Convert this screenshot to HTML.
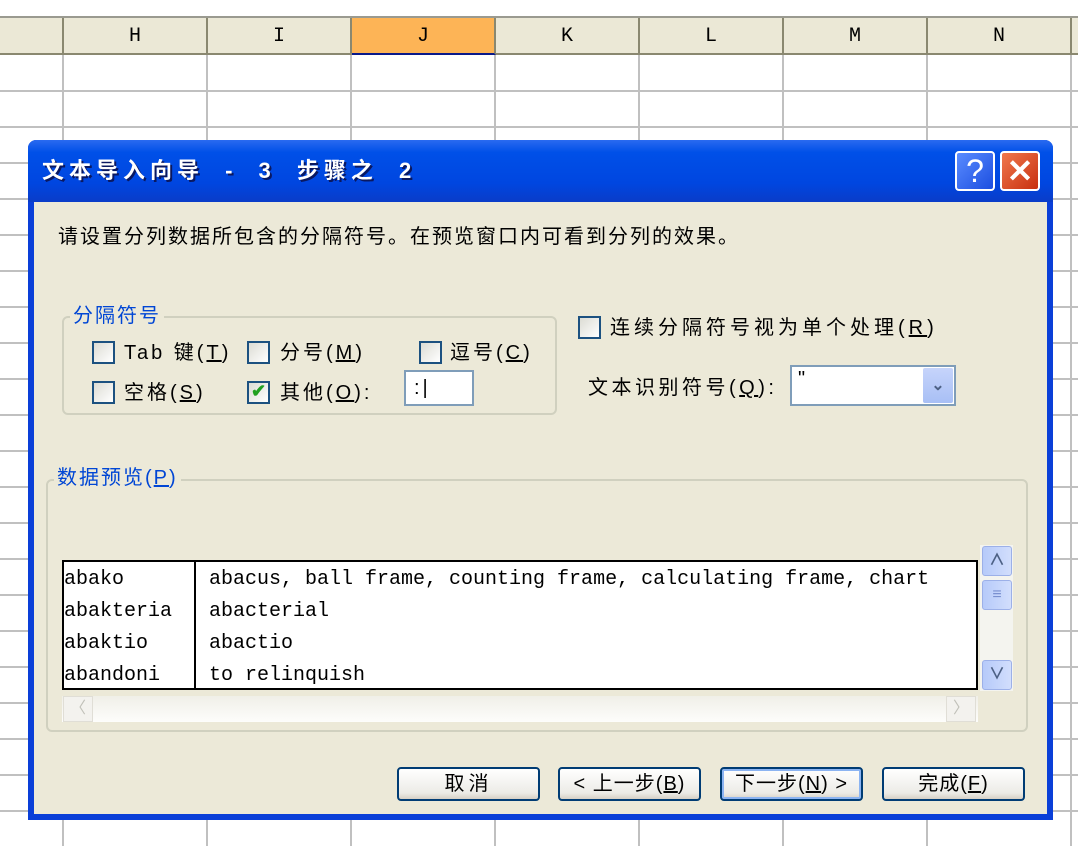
<!DOCTYPE html>
<html><head><meta charset="utf-8"><style>
*{box-sizing:border-box;margin:0;padding:0}
html,body{width:1078px;height:846px;overflow:hidden}
body{background:#fff;position:relative;font-family:"Liberation Sans","Noto Sans CJK SC","WenQuanYi Zen Hei",sans-serif;}
.a{position:absolute}
.hl{position:absolute;left:0;width:1078px;height:2px;background:#c0c0c0}
.vl{position:absolute;top:18px;width:2px;height:828px;background:#c0c0c0}
.hd{position:absolute;top:18px;height:37px;background:#ebe8d6;border-right:2px solid #8a8870;border-bottom:2px solid #8a8870;font:20px "Liberation Mono",monospace;text-align:center;line-height:37px;color:#000}
.t{position:absolute;font-size:20px;color:#000;white-space:nowrap;line-height:24px;letter-spacing:3px}
.cb{position:absolute;width:23px;height:23px;border:2px solid #1c5180;background:linear-gradient(135deg,#dcdcd4,#fff)}
.gb{position:absolute;border:2px solid #d0d0bf;border-radius:6px}
.lg{position:absolute;background:#ece9d8;color:#0046d5;font-size:20px;padding:0 3px;line-height:24px;white-space:nowrap;letter-spacing:2px}
.btn{position:absolute;top:767px;width:143px;height:34px;border:2px solid #003c74;border-radius:4px;background:linear-gradient(#fff,#ecebe6 80%,#d6d0c5);font-size:20px;text-align:center;line-height:30px;letter-spacing:1px;white-space:nowrap}
.m{font-family:"Liberation Mono",monospace;font-size:20px;position:absolute;white-space:nowrap;line-height:22px}
</style></head><body>
<div class="a" style="left:0;top:16px;width:1078px;height:2px;background:#9a9a90"></div>
<div class="hd" style="left:0;width:64px"></div>
<div class="hd" style="left:64px;width:144px">H</div>
<div class="hd" style="left:208px;width:144px">I</div>
<div class="hd" style="left:352px;width:144px;background:#fdb456;border-bottom-color:#0a1a8a">J</div>
<div class="hd" style="left:496px;width:144px">K</div>
<div class="hd" style="left:640px;width:144px">L</div>
<div class="hd" style="left:784px;width:144px">M</div>
<div class="hd" style="left:928px;width:144px">N</div>
<div class="hd" style="left:1072px;width:10px"></div>
<div class="hl" style="top:90px"></div><div class="hl" style="top:126px"></div><div class="hl" style="top:162px"></div><div class="hl" style="top:198px"></div><div class="hl" style="top:234px"></div><div class="hl" style="top:270px"></div><div class="hl" style="top:306px"></div><div class="hl" style="top:342px"></div><div class="hl" style="top:378px"></div><div class="hl" style="top:414px"></div><div class="hl" style="top:450px"></div><div class="hl" style="top:486px"></div><div class="hl" style="top:522px"></div><div class="hl" style="top:558px"></div><div class="hl" style="top:594px"></div><div class="hl" style="top:630px"></div><div class="hl" style="top:666px"></div><div class="hl" style="top:702px"></div><div class="hl" style="top:738px"></div><div class="hl" style="top:774px"></div><div class="hl" style="top:810px"></div>
<div class="vl" style="left:62px;top:55px"></div><div class="vl" style="left:206px;top:55px"></div><div class="vl" style="left:350px;top:55px"></div><div class="vl" style="left:494px;top:55px"></div><div class="vl" style="left:638px;top:55px"></div><div class="vl" style="left:782px;top:55px"></div><div class="vl" style="left:926px;top:55px"></div><div class="vl" style="left:1070px;top:55px"></div>

<div class="a" style="left:28px;top:140px;width:1025px;height:680px;background:#0a3fd8;border-radius:8px 8px 0 0"></div>
<div class="a" style="left:28px;top:140px;width:1025px;height:62px;background:linear-gradient(#2a6af0,#0050e8 20%,#0046e0 70%,#0a3cc8);border-radius:8px 8px 0 0"></div>
<div class="a" style="left:42px;top:156px;color:#fff;font-size:22px;font-weight:bold;text-shadow:2px 2px 0 #0a1860;white-space:nowrap;line-height:30px;letter-spacing:5px;word-spacing:10px">文本导入向导 - 3 步骤之 2</div>
<div class="a" style="left:955px;top:151px;width:40px;height:40px;border:2px solid #fff;border-radius:4px;background:linear-gradient(135deg,#5a8cff,#1c4ee0);color:#fff;font-size:32px;text-align:center;line-height:36px">?</div>
<div class="a" style="left:1000px;top:151px;width:40px;height:40px;border:2px solid #fff;border-radius:4px;background:linear-gradient(135deg,#f0784c,#c83010);color:#fff;font-size:32px;text-align:center;line-height:36px;font-weight:bold">✕</div>
<div class="a" style="left:34px;top:202px;width:1013px;height:612px;background:#ece9d8"></div>

<div class="t" style="left:58px;top:225px;letter-spacing:2px">请设置分列数据所包含的分隔符号。在预览窗口内可看到分列的效果。</div>

<div class="gb" style="left:62px;top:316px;width:495px;height:99px"></div>
<div class="lg" style="left:70px;top:304px">分隔符号</div>
<div class="cb" style="left:92px;top:341px"></div><div class="t" style="left:124px;top:341px">Tab 键(<u>T</u>)</div>
<div class="cb" style="left:247px;top:341px"></div><div class="t" style="left:280px;top:341px">分号(<u>M</u>)</div>
<div class="cb" style="left:419px;top:341px"></div><div class="t" style="left:450px;top:341px">逗号(<u>C</u>)</div>
<div class="cb" style="left:92px;top:381px"></div><div class="t" style="left:124px;top:381px">空格(<u>S</u>)</div>
<div class="cb" style="left:247px;top:381px"><span style="position:absolute;left:2px;top:-2px;color:#21a121;font-size:18px;font-weight:bold">✔</span></div><div class="t" style="left:280px;top:381px">其他(<u>O</u>):</div>
<div class="a" style="left:404px;top:370px;width:70px;height:36px;background:#fff;border:2px solid #7f9db9"><span class="t" style="left:8px;top:4px">:|</span></div>

<div class="cb" style="left:578px;top:316px"></div><div class="t" style="left:610px;top:316px;letter-spacing:4px">连续分隔符号视为单个处理(<u>R</u>)</div>
<div class="t" style="left:588px;top:376px;letter-spacing:3.5px">文本识别符号(<u>Q</u>):</div>
<div class="a" style="left:790px;top:365px;width:166px;height:41px;background:#fff;border:2px solid #7f9db9"><span class="t" style="left:6px;top:0px">"</span><div class="a" style="right:1px;top:1px;width:30px;height:35px;background:linear-gradient(#c6d4fb,#a8bff5);border-radius:2px;color:#4d6185;text-align:center;font-size:16px;line-height:35px;font-weight:bold">⌄</div></div>

<div class="gb" style="left:46px;top:479px;width:982px;height:253px"></div>
<div class="lg" style="left:54px;top:466px">数据预览(<u>P</u>)</div>
<div class="a" style="left:62px;top:560px;width:916px;height:130px;background:#fff;border:2px solid #000"></div>
<div class="a" style="left:194px;top:562px;width:2px;height:126px;background:#000"></div>
<div class="m" style="left:64px;top:569px">abako</div><div class="m" style="left:209px;top:569px">abacus, ball frame, counting frame, calculating frame, chart</div>
<div class="m" style="left:64px;top:601px">abakteria</div><div class="m" style="left:209px;top:601px">abacterial</div>
<div class="m" style="left:64px;top:633px">abaktio</div><div class="m" style="left:209px;top:633px">abactio</div>
<div class="m" style="left:64px;top:665px">abandoni</div><div class="m" style="left:209px;top:665px">to relinquish</div>
<div class="a" style="left:980px;top:545px;width:33px;height:146px;background:#f4f4ef"></div>
<div class="a" style="left:982px;top:546px;width:30px;height:30px;background:linear-gradient(90deg,#b6cafa,#d2defc);border:1px solid #9cb0e8;border-radius:3px;color:#4d6185;text-align:center;font-weight:bold;line-height:28px">∧</div>
<div class="a" style="left:982px;top:580px;width:30px;height:30px;background:linear-gradient(90deg,#b6cafa,#d2defc);border:1px solid #9cb0e8;border-radius:3px;color:#7a90d0;text-align:center;line-height:28px">≡</div>
<div class="a" style="left:982px;top:660px;width:30px;height:30px;background:linear-gradient(90deg,#b6cafa,#d2defc);border:1px solid #9cb0e8;border-radius:3px;color:#4d6185;text-align:center;font-weight:bold;line-height:28px">∨</div>
<div class="a" style="left:62px;top:696px;width:916px;height:26px;background:linear-gradient(#f0efe8,#fdfdfb)"></div>
<div class="a" style="left:63px;top:696px;width:30px;height:26px;background:#f3f2ee;border:1px solid #e0ded6;color:#c0c0b8;text-align:center;line-height:24px">〈</div>
<div class="a" style="left:946px;top:696px;width:30px;height:26px;background:#f3f2ee;border:1px solid #e0ded6;color:#c0c0b8;text-align:center;line-height:24px">〉</div>

<div class="btn" style="left:397px;letter-spacing:4px">取消</div>
<div class="btn" style="left:558px">&lt; 上一步(<u>B</u>)</div>
<div class="btn" style="left:720px;box-shadow:inset 0 0 0 2px #8cb4f2">下一步(<u>N</u>) &gt;</div>
<div class="btn" style="left:882px">完成(<u>F</u>)</div>
</body></html>
